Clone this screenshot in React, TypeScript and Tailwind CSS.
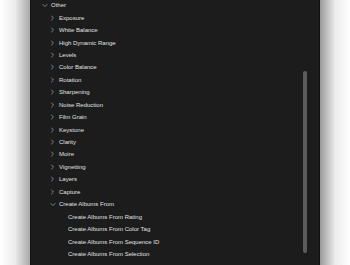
import React from 'react';

type Row = { label: string; level: number; chevron?: 'right' | 'down' };

const rows: Row[] = [
  { label: 'Other', level: 0, chevron: 'down' },
  { label: 'Exposure', level: 1, chevron: 'right' },
  { label: 'White Balance', level: 1, chevron: 'right' },
  { label: 'High Dynamic Range', level: 1, chevron: 'right' },
  { label: 'Levels', level: 1, chevron: 'right' },
  { label: 'Color Balance', level: 1, chevron: 'right' },
  { label: 'Rotation', level: 1, chevron: 'right' },
  { label: 'Sharpening', level: 1, chevron: 'right' },
  { label: 'Noise Reduction', level: 1, chevron: 'right' },
  { label: 'Film Grain', level: 1, chevron: 'right' },
  { label: 'Keystone', level: 1, chevron: 'right' },
  { label: 'Clarity', level: 1, chevron: 'right' },
  { label: 'Moire', level: 1, chevron: 'right' },
  { label: 'Vignetting', level: 1, chevron: 'right' },
  { label: 'Layers', level: 1, chevron: 'right' },
  { label: 'Capture', level: 1, chevron: 'right' },
  { label: 'Create Albums From', level: 1, chevron: 'down' },
  { label: 'Create Albums From Rating', level: 2 },
  { label: 'Create Albums From Color Tag', level: 2 },
  { label: 'Create Albums From Sequence ID', level: 2 },
  { label: 'Create Albums From Selection', level: 2 },
];

const Chevron = ({ dir }: { dir: 'right' | 'down' }) =>
  dir === 'right' ? (
    <svg width="5" height="6" viewBox="0 0 5 6" className="shrink-0">
      <path d="M1.5 1 L3.5 3 L1.5 5" fill="none" stroke="#a0a0a0" strokeWidth="0.8" strokeLinecap="round" strokeLinejoin="round" />
    </svg>
  ) : (
    <svg width="6" height="5" viewBox="0 0 6 5" className="shrink-0">
      <path d="M1 1.5 L3 3.5 L5 1.5" fill="none" stroke="#a0a0a0" strokeWidth="0.8" strokeLinecap="round" strokeLinejoin="round" />
    </svg>
  );

const indent = ['pl-[11px]', 'pl-[19px]', 'pl-[28px]'];

export default function App() {
  return (
    <div className="flex h-[265px] w-[350px] overflow-hidden bg-white" style={{ fontFamily: '"Liberation Sans", Arial, sans-serif' }}>
      {/* left shadow */}
      <div className="w-[30px] shrink-0 bg-gradient-to-r from-white via-[#ececec] to-[#a9a9a9]" />

      {/* panel */}
      <div className="relative w-[290px] shrink-0 bg-[#1c1c1c] border-l border-[#111] border-r">
        <div className="mt-[-1px] flex flex-col">
          {rows.map((r, i) => (
            <div key={i} className={`flex h-[12.45px] items-center ${indent[r.level]}`}>
              <div className="flex w-[9px] items-center justify-start">
                {r.chevron && <Chevron dir={r.chevron} />}
              </div>
              <span className="text-[6px] leading-none whitespace-nowrap text-[#e0e0e0]">{r.label}</span>
            </div>
          ))}
        </div>

        {/* scrollbar */}
        <div className="absolute left-[272px] top-[71px] h-[182px] w-[4px] rounded-full bg-[#5c5c5c]" />
      </div>

      {/* right shadow */}
      <div className="w-[30px] shrink-0 bg-gradient-to-r from-[#9a9a9a] via-[#ececec] to-white" />
    </div>
  );
}
